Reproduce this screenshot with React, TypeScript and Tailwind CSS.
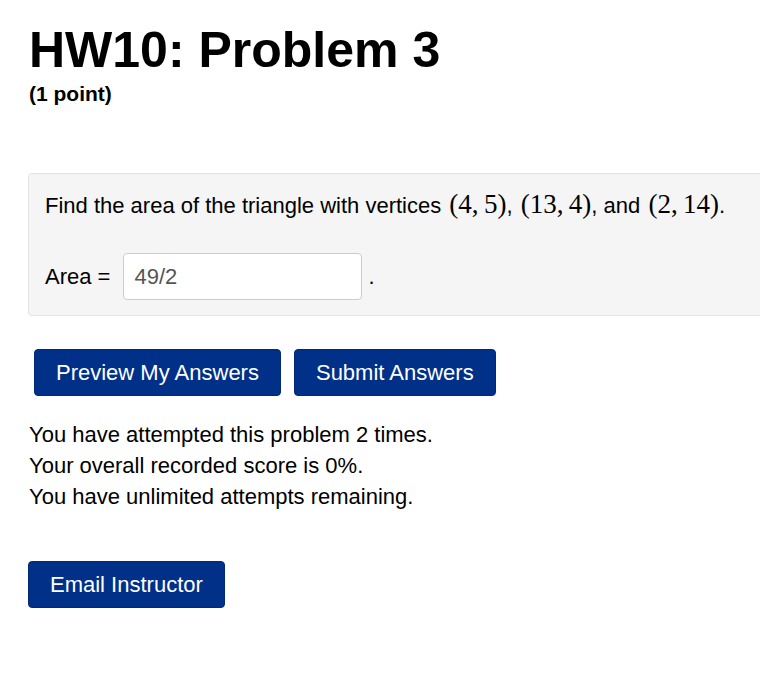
import React from "react";

const sans = { fontFamily: '"Liberation Sans", Arial, sans-serif' };

function M({ children }: { children: React.ReactNode }) {
  return (
    <span className="ml-[2px] text-[27px] font-['Liberation_Serif',serif]">{children}</span>
  );
}

function Btn({ children }: { children: React.ReactNode }) {
  return (
    <button className="h-[47px] rounded-[4px] border border-[#002a78] bg-[#003087] px-[21px] text-[22px] text-white">
      {children}
    </button>
  );
}

export default function App() {
  return (
    <div style={sans} className="w-[760px] h-[695px] overflow-hidden bg-white text-black">
      <div className="pl-[29px] pt-[22px]">
        <h1 className="text-[50px] font-bold leading-[56px]">HW10: Problem 3</h1>
        <div className="mt-[4px] text-[21px] font-bold leading-[24px]">(1 point)</div>
      </div>

      <div className="ml-[28px] mt-[67px] w-[760px] rounded-[4px] border border-[#e3e3e3] bg-[#f5f5f5] pl-[16px] pt-[12px] pb-[15px]">
        <p className="text-[22px] leading-[36px]">
          Find the area of the triangle with vertices <M>(4,&#8201;5)</M>, <M>(13,&#8201;4)</M>, and{" "}
          <M>(2,&#8201;14)</M>.
        </p>
        <div className="mt-[29px] flex items-center text-[22px]">
          <span>Area =</span>
          <input
            readOnly
            value="49/2"
            className="ml-[13px] h-[47px] w-[239px] rounded-[4px] border border-[#cccccc] bg-white px-[10px] text-[22px] text-[#555555] outline-none"
          />
          <span className="ml-[6px]">.</span>
        </div>
      </div>

      <div className="ml-[34px] mt-[33px] flex gap-[13px]">
        <Btn>Preview My Answers</Btn>
        <Btn>Submit Answers</Btn>
      </div>

      <div className="ml-[29px] mt-[23px] text-[22px] leading-[31px]">
        <div>You have attempted this problem 2 times.</div>
        <div>Your overall recorded score is 0%.</div>
        <div>You have unlimited attempts remaining.</div>
      </div>

      <div className="ml-[28px] mt-[49px]">
        <Btn>Email Instructor</Btn>
      </div>
    </div>
  );
}
